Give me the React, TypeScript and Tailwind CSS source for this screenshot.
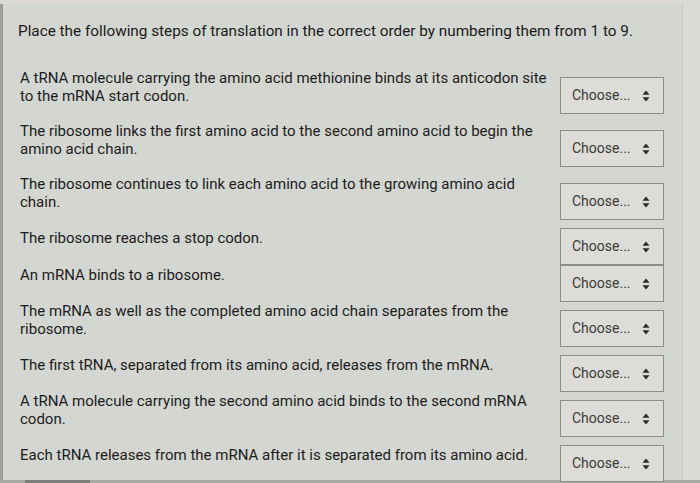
import React from 'react';

const steps: string[] = [
  'A tRNA molecule carrying the amino acid methionine binds at its anticodon site to the mRNA start codon.',
  'The ribosome links the first amino acid to the second amino acid to begin the amino acid chain.',
  'The ribosome continues to link each amino acid to the growing amino acid chain.',
  'The ribosome reaches a stop codon.',
  'An mRNA binds to a ribosome.',
  'The mRNA as well as the completed amino acid chain separates from the ribosome.',
  'The first tRNA, separated from its amino acid, releases from the mRNA.',
  'A tRNA molecule carrying the second amino acid binds to the second mRNA codon.',
  'Each tRNA releases from the mRNA after it is separated from its amino acid.',
];

const SortArrows = () => (
  <svg width="8" height="12" viewBox="0 0 8 12" className="fill-[#2a2a2a]">
    <path d="M4 0.5 L7.5 4.8 H0.5 Z" />
    <path d="M0.5 7.2 H7.5 L4 11.5 Z" />
  </svg>
);

const ChooseBox = () => (
  <div className="flex h-[37px] w-[104px] shrink-0 items-center justify-between border border-[#8c8d8a] bg-[#dddcd8] pl-[11px] pr-[13px] text-[14px] text-[#3b3b3b]">
    <span>Choose...</span>
    <SortArrows />
  </div>
);

export default function App() {
  return (
    <div className="h-[483px] w-[700px] overflow-hidden bg-[#d4d6d1] font-['Roboto',sans-serif] text-[#1c1c1c]">
      <div className="h-[4px] bg-[#ddd9d5]" />
      <div className="flex h-[476px]">
        <div className="w-[3px] bg-[#9d9d99]" />
        <div className="flex-1 pl-[15px] pr-[18px] pt-[17px]">
          <p className="text-[15.3px] leading-[20px] text-[#1a1a1a]">
            Place the following steps of translation in the correct order by numbering them from 1 to 9.
          </p>
          <div className="mt-[28px] flex flex-col">
            {steps.map((s, i) => (
              <div key={i} className="flex items-center pl-[2px]">
                <p className="w-[532px] pb-[17px] text-[15px] leading-[18px]">{s}</p>
                <div className="ml-auto">
                  <ChooseBox />
                </div>
              </div>
            ))}
          </div>
        </div>
        <div className="w-[18px] border-l border-[#c6c9c5] bg-[#d9dad6]" />
      </div>
      <div className="flex h-[3px] bg-[#a9aaa6]">
        <div className="ml-[25px] w-[65px] bg-[#7d7e7b]" />
      </div>
    </div>
  );
}
